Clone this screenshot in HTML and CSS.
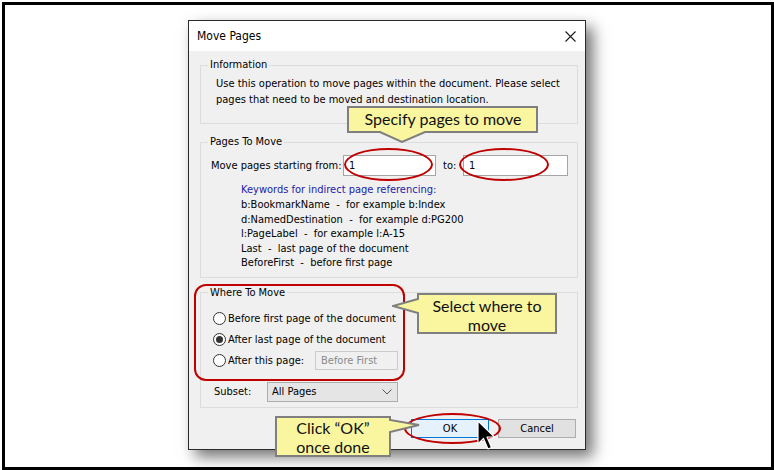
FILE: index.html
```html
<!DOCTYPE html>
<html>
<head>
    <title>Move Pages</title>
    <link rel="stylesheet" href="styles.css">
</head>
<body>
    <div class="frame">
        <div class="dialog">
            <div class="titlebar">
                <span class="title">Move Pages</span>
                <svg class="close" width="11" height="11" viewBox="0 0 11 11">
                    <path d="M0.5 0.5 L10.5 10.5 M10.5 0.5 L0.5 10.5" stroke="#1a1a1a" stroke-width="1.1" fill="none"/>
                </svg>
            </div>

            <div class="dialog-body">
                <fieldset class="group info">
                    <legend>Information</legend>
                    <p>Use this operation to move pages within the document. Please select pages that need to be moved and destination location.</p>
                </fieldset>

                <fieldset class="group pages">
                    <legend>Pages To Move</legend>
                    <div class="range-row">
                        <label class="from-label" for="from_page">Move pages starting from:</label>
                        <input class="field from-field" id="from_page" type="text" value="1">
                        <label class="to-label" for="to_page">to:</label>
                        <input class="field to-field" id="to_page" type="text" value="1">
                    </div>
                    <div class="keywords">
                        <div class="kw-head">Keywords for indirect page referencing:</div>
                        <div>b:BookmarkName &nbsp;- &nbsp;for example b:Index</div>
                        <div>d:NamedDestination &nbsp;- &nbsp;for example d:PG200</div>
                        <div>l:PageLabel &nbsp;- &nbsp;for example l:A-15</div>
                        <div>Last &nbsp;- &nbsp;last page of the document</div>
                        <div>BeforeFirst &nbsp;- &nbsp;before first page</div>
                    </div>
                </fieldset>

                <fieldset class="group where">
                    <legend>Where To Move</legend>
                    <label class="radio-row"><input type="radio" name="where"><span>Before first page of the document</span></label>
                    <label class="radio-row"><input type="radio" name="where" checked><span>After last page of the document</span></label>
                    <label class="radio-row"><input type="radio" name="where"><span class="page-label">After this page:</span><input class="field disabled-field" type="text" value="Before First" disabled></label>
                    <div class="subset-row">
                        <span class="subset-label">Subset:</span>
                        <div class="combo">
                            <span>All Pages</span>
                            <svg width="10" height="6" viewBox="0 0 10 6"><path d="M0.5 0.5 L5 5 L9.5 0.5" stroke="#555" fill="none"/></svg>
                        </div>
                    </div>
                </fieldset>

                <div class="buttons">
                    <button class="btn btn-default">OK</button>
                    <button class="btn">Cancel</button>
                </div>
            </div>

            <!-- annotations drawn over the dialog -->
            <div class="mark ring ring-from"></div>
            <div class="mark ring ring-to"></div>
            <div class="mark ring ring-ok"></div>
            <div class="mark box-where"></div>

            <div class="callout callout-specify">
                <svg width="192" height="38" viewBox="0 0 192 38">
                    <path d="M1 1 H190 V26 H78 L55 36 L33 26 H1 Z" fill="#faf6a0" stroke="#7f7f7f" stroke-width="2"/>
                </svg>
                <div class="callout-text">Specify pages to move</div>
            </div>

            <div class="callout callout-where">
                <svg width="166" height="42" viewBox="0 0 166 42">
                    <path d="M26 1 H164 V40 H26 V20 L1 13 L26 6 Z" fill="#faf6a0" stroke="#7f7f7f" stroke-width="2"/>
                </svg>
                <div class="callout-text">Select where to<br>move</div>
            </div>

            <div class="callout callout-ok">
                <svg width="146" height="42" viewBox="0 0 146 42">
                    <path d="M1 1 H115 V4 L144 9 L115 16 V40 H1 Z" fill="#faf6a0" stroke="#7f7f7f" stroke-width="2"/>
                </svg>
                <div class="callout-text">Click “OK”<br>once done</div>
            </div>

            <svg class="pointer" width="20" height="31" viewBox="0 0 20 31">
                <path d="M1 1 V24 L6.5 18.5 L11 29 L14.5 27.5 L10 17 L17.5 17 Z" fill="#000" stroke="#fff" stroke-width="1.2" stroke-linejoin="round"/>
            </svg>
        </div>
    </div>
</body>
</html>
```

FILE: styles.css
```css
body { margin: 0; background: #fff; font-family: "DejaVu Sans Condensed", "Liberation Sans", sans-serif; font-size: 11px; color: #000; }

.frame { width: 772px; height: 468px; margin: 2px 0 0 2px; border: 3px solid #000; box-sizing: border-box; background: #fff;
    display: flex; align-items: center; justify-content: center; padding: 0 2px 2px 0; }

.dialog { position: relative; width: 398px; height: 430px; box-sizing: border-box; border: 1px solid #2b2b2b; background: #f0f0f0;
    box-shadow: 7px 7px 14px rgba(0, 0, 0, 0.55); }

.titlebar { height: 30px; background: #fff; display: flex; align-items: center; justify-content: space-between; padding: 0 9px 0 8px; }
.title { font-size: 12px; }

.dialog-body { padding: 7px 7px 0 11px; }

.group { margin: 0; padding: 0 8px 0 7px; border: 1px solid #dcdcdc; }
.group legend { padding: 0 2px; line-height: 14px; }
.group + .group { margin-top: 11px; }

.info p { margin: 4px 0 0 8px; line-height: 16px; padding-bottom: 15px; }

.pages { padding-bottom: 6px; }
.range-row { display: flex; align-items: center; margin-top: 6px; height: 21px; }
.from-label { width: 132px; margin-left: 3px; }
.to-label { width: 20px; margin-left: 7px; }
.field { height: 21px; box-sizing: border-box; border: 1px solid #a5a5a5; background: #fff; padding: 0 5px; font: inherit; }
.from-field { width: 93px; }
.to-field { width: 105px; }

.keywords { margin: 6px 0 0 33px; line-height: 14.5px; }
.kw-head { color: #2222aa; line-height: 16px; }

.where { margin-top: 8px !important; padding-bottom: 5px; }
.radio-row { display: flex; align-items: center; height: 21px; }
.radio-row:first-of-type { margin-top: 8px; }
.radio-row input[type="radio"] { appearance: none; width: 13px; height: 13px; margin: 0 2px 0 5px; border: 1px solid #333; border-radius: 50%; background: #fff; display: grid; place-items: center; }
.radio-row input[type="radio"]:checked::after { content: ""; width: 7px; height: 7px; border-radius: 50%; background: #333; }
.page-label { width: 87px; }
.disabled-field { width: 83px; height: 19px; background: #f0f0f0; border-color: #cccccc; color: #8a8a8a; }

.subset-row { display: flex; align-items: center; margin-top: 11px; }
.subset-label { width: 53px; margin-left: 6px; }
.combo { width: 131px; height: 20px; box-sizing: border-box; border: 1px solid #adadad; background: #e5e5e5; display: flex; align-items: center; justify-content: space-between; padding: 0 5px 0 4px; }

.buttons { display: flex; justify-content: flex-end; gap: 9px; margin: 11px 2px 0 0; }
.btn { width: 78px; height: 19px; font: inherit; border: 1px solid #adadad; background: #e1e1e1; padding: 0; }
.btn-default { border-color: #0078d7; background: #e5f1fb; }

/* annotation layer */
.mark { position: absolute; box-sizing: border-box; border: 2px solid #c00000; }
.ring { border-radius: 50%; }
.ring-from { left: 155px; top: 127px; width: 89px; height: 33px; }
.ring-to { left: 270px; top: 127px; width: 90px; height: 33px; }
.ring-ok { left: 215px; top: 392px; width: 97px; height: 31px; }
.box-where { left: 5px; top: 263px; width: 211px; height: 97px; border-radius: 12px; }

.callout { position: absolute; font-family: Lato, "Open Sans", sans-serif; font-size: 16px; color: #111; }
.callout svg { display: block; }
.callout-text { position: absolute; text-align: center; line-height: 19px; }
.callout-specify { left: 158px; top: 85px; }
.callout-specify .callout-text { left: 1px; top: 3px; width: 190px; }
.callout-where { left: 203px; top: 272px; }
.callout-where .callout-text { left: 26px; top: 3px; width: 138px; }
.callout-ok { left: 86px; top: 395px; }
.callout-ok .callout-text { left: 1px; top: 2px; width: 114px; }

.pointer { position: absolute; left: 288px; top: 399px; }
```
